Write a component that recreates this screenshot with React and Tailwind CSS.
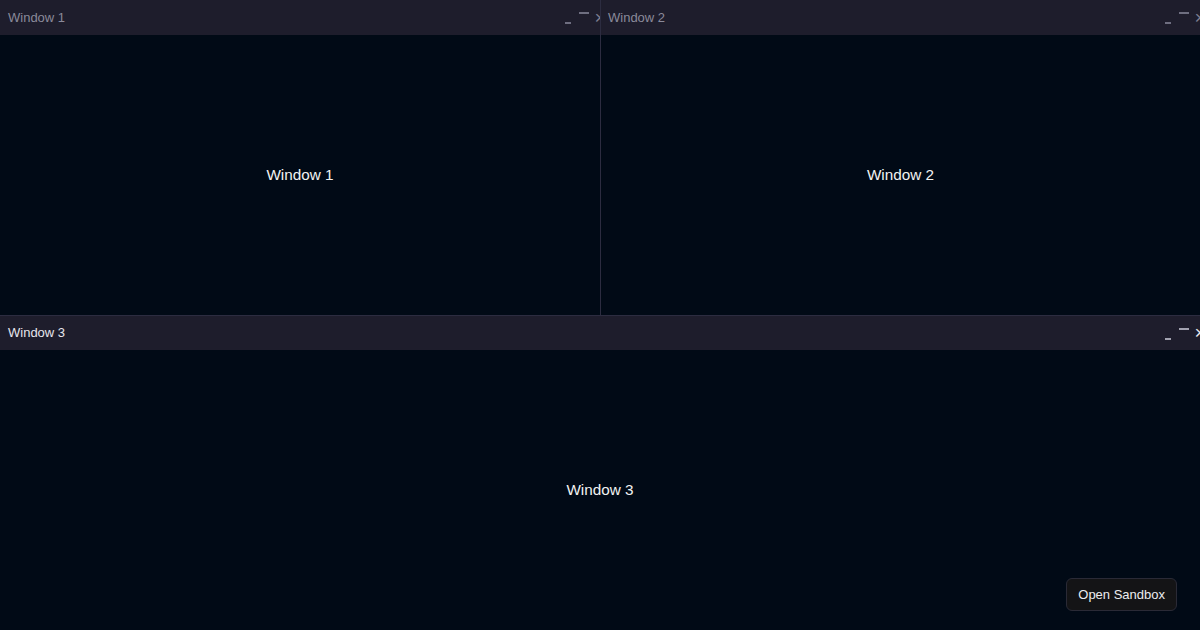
import React from "react";

const font = { fontFamily: '"Liberation Sans", Arial, sans-serif' };

function Controls({ active }) {
  const bar = active ? "bg-[#a2a2b0]" : "bg-[#6e6e80]";
  return (
    <div className="flex h-full shrink-0 -mr-2">
      <button className="relative w-4 h-full">
        <span className={`absolute left-[5px] top-[22px] w-[6px] h-[2px] ${bar}`} />
      </button>
      <button className="relative w-4 h-full">
        <span className={`absolute left-[3px] top-[12px] w-[10px] h-[2px] ${bar}`} />
      </button>
      <button
        className={`w-4 h-full flex items-center justify-center text-[19px] leading-none pb-[1px] ${
          active ? "text-[#e8e8ee]" : "text-[#7c7c8e]"
        }`}
      >
        ×
      </button>
    </div>
  );
}

function Window({ title, active, className = "", pad = "pl-2", bar = "h-[35px]" }) {
  return (
    <div className={`flex flex-col overflow-hidden bg-[#010a16] ${className}`}>
      <div className={`shrink-0 flex items-center bg-[#1e1d2c] ${bar} ${pad}`}>
        <span
          className={`flex-1 text-[13px] ${
            active ? "text-[#e6e6ec]" : "text-[#8a8a9a]"
          }`}
        >
          {title}
        </span>
        <Controls active={active} />
      </div>
      <div className="flex-1 flex items-center justify-center text-[15.3px] text-[#f2f2f2]">
        {title}
      </div>
    </div>
  );
}

export default function App() {
  return (
    <div className="relative w-[1200px] h-[630px] overflow-hidden bg-[#010a16]" style={font}>
      <div className="flex h-[315px]">
        <Window title="Window 1" className="w-[600px]" />
        <Window
          title="Window 2"
          pad="pl-[7px]"
          className="flex-1 border-l border-[#2c2c40]"
        />
      </div>
      <Window
        title="Window 3"
        active
        bar="h-[34px]"
        className="h-[315px] border-t border-[#2c2c40]"
      />
      <button className="absolute right-[23px] bottom-[19px] h-[33px] px-[11px] rounded-md bg-[#141416] border border-[#2a2a36] text-[13px] text-[#ececf0]">
        Open Sandbox
      </button>
    </div>
  );
}
